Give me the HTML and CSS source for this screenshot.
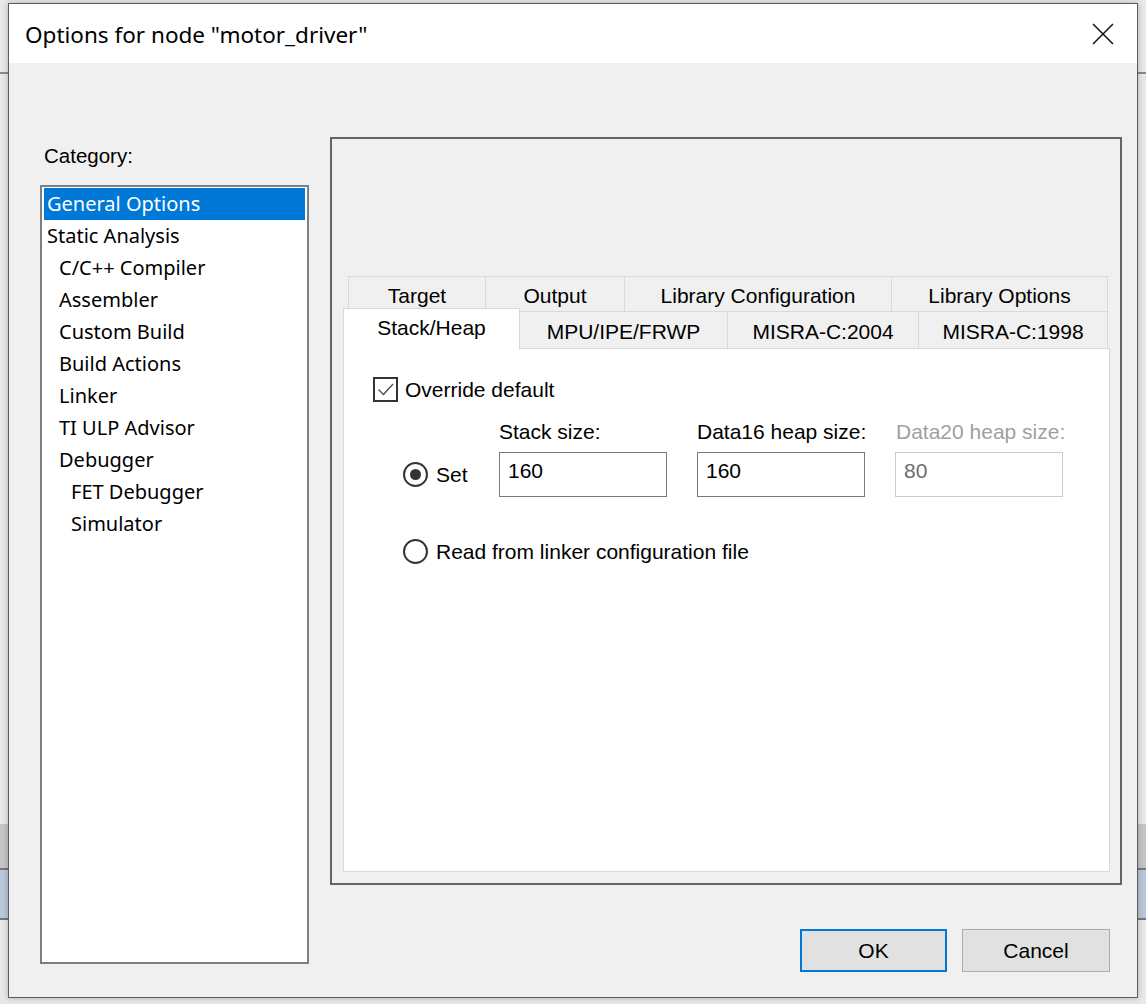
FILE: index.html
```html
<!DOCTYPE html>
<html>
<head>
<meta charset="utf-8">
<title>Options for node "motor_driver"</title>
<link rel="stylesheet" href="styles.css">
</head>
<body>
<div class="dialog">
  <div class="titlebar">
    <span class="title">Options for node "motor_driver"</span>
    <svg class="close" width="22" height="22" viewBox="0 0 22 22"><path d="M1 1 L21 21 M21 1 L1 21" stroke="#111" stroke-width="1.5" fill="none"/></svg>
  </div>
  <div class="body">
    <div class="leftcol">
      <div class="cat-label">Category:</div>
      <div class="listbox">
        <div class="item sel">General Options</div>
        <div class="item">Static Analysis</div>
        <div class="item l1">C/C++ Compiler</div>
        <div class="item l1">Assembler</div>
        <div class="item l1">Custom Build</div>
        <div class="item l1">Build Actions</div>
        <div class="item l1">Linker</div>
        <div class="item l1">TI ULP Advisor</div>
        <div class="item l1">Debugger</div>
        <div class="item l2">FET Debugger</div>
        <div class="item l2">Simulator</div>
      </div>
    </div>
    <div class="rightcol">
      <div class="group">
        <div class="tabrow back">
          <div class="tab t-target">Target</div>
          <div class="tab t-output">Output</div>
          <div class="tab t-libconf">Library Configuration</div>
          <div class="tab t-libopt">Library Options</div>
        </div>
        <div class="tabrow front">
          <div class="tab t-stack active">Stack/Heap</div>
          <div class="tab t-mpu">MPU/IPE/FRWP</div>
          <div class="tab t-m2004">MISRA-C:2004</div>
          <div class="tab t-m1998">MISRA-C:1998</div>
        </div>
        <div class="page">
          <div class="check-row">
            <span class="checkbox"><svg width="21" height="21" viewBox="0 0 21 21"><path d="M3.5 10.5 L8.5 15.5 L18 5" stroke="#4a4a4a" stroke-width="1.3" fill="none"/></svg></span>
            <span class="lbl">Override default</span>
          </div>
          <div class="set-grid">
            <div class="flabel c2">Stack size:</div>
            <div class="flabel c3">Data16 heap size:</div>
            <div class="flabel c4 disabled">Data20 heap size:</div>
            <div class="radio-wrap c1"><span class="radio on"></span><span class="lbl">Set</span></div>
            <div class="input c2">160</div>
            <div class="input c3">160</div>
            <div class="input c4 dis">80</div>
          </div>
          <div class="radio-row"><span class="radio"></span><span class="lbl">Read from linker configuration file</span></div>
        </div>
      </div>
      <div class="buttons">
        <div class="btn default">OK</div>
        <div class="btn">Cancel</div>
      </div>
    </div>
  </div>
</div>
</body>
</html>
```

FILE: styles.css
```css
html, body {
  margin: 0;
  padding: 0;
}
body {
  width: 1146px;
  height: 1004px;
  overflow: hidden;
  background-color: #e8e8e8;
  background-image:
    linear-gradient(to bottom,
      transparent 0, transparent 72px, #8a8a8a 72px, #8a8a8a 74px, transparent 74px,
      transparent 824px, #c6c6c6 824px, #c6c6c6 868px, #777 868px, #777 870px,
      #b9c8da 870px, #b9c8da 918px, #777 918px, #777 920px, transparent 920px);
  font-family: "Liberation Sans", Arial, sans-serif;
  color: #000;
}
.dialog {
  margin: 3px 0 0 8px;
  width: 1128px;
  height: 993px;
  border: 1px solid #5c5c5c;
  background: #f0f0f0;
  box-shadow: 0 0 6px rgba(0,0,0,0.25);
  display: flex;
  flex-direction: column;
}
.titlebar {
  height: 59px;
  background: #fff;
  display: flex;
  align-items: center;
  justify-content: space-between;
  padding: 2px 23px 0 16px;
  box-sizing: border-box;
}
.title {
  font-family: "Noto Sans", "Open Sans", sans-serif;
  font-size: 22.5px;
  color: #000;
}
.close {
  display: block;
  margin-top: -2px;
}
.body {
  flex: 1;
  display: flex;
  padding: 74px 15px 0 31px;
  gap: 21px;
}
.leftcol {
  width: 269px;
  display: flex;
  flex-direction: column;
}
.cat-label {
  padding-top: 8px;
  height: 22px;
  line-height: 22px;
  margin-bottom: 18px;
  font-size: 20.5px;
  padding-left: 4px;
}
.listbox {
  height: 779px;
  box-sizing: border-box;
  border: 2px solid #7f7f7f;
  background: #fff;
  padding: 1px 2px;
}
.item {
  height: 32px;
  line-height: 32px;
  padding-left: 3px;
  font-family: "Noto Sans", "Open Sans", sans-serif;
  font-size: 20px;
  color: #000;
  white-space: nowrap;
}
.item.sel {
  background: #0078d7;
  color: #fff;
}
.item.l1 { padding-left: 15px; }
.item.l2 { padding-left: 27px; }
.rightcol {
  width: 792px;
  display: flex;
  flex-direction: column;
}
.group {
  height: 748px;
  box-sizing: border-box;
  border: 2px solid #646464;
  padding: 137px 10px 11px 11px;
  display: flex;
  flex-direction: column;
}
.tabrow {
  display: flex;
  font-size: 21px;
}
.tabrow.back {
  height: 35px;
  margin-left: 5px;
}
.tabrow.front {
  height: 37px;
}
.tab {
  box-sizing: border-box;
  border: 1px solid #d9d9d9;
  border-bottom: none;
  margin-right: -1px;
  background: #f0f0f0;
  display: flex;
  align-items: center;
  justify-content: center;
  white-space: nowrap;
}
.tabrow.back .tab { padding-top: 3px; }
.tabrow.front .tab { padding-top: 3px; }
.t-target { width: 138px; }
.t-output { width: 140px; }
.t-libconf { width: 268px; }
.t-libopt { width: 217px; }
.t-stack { width: 177px; }
.t-mpu { width: 209px; }
.t-m2004 { width: 192px; }
.t-m1998 { width: 190px; }
.tab.active {
  background: #fff;
  margin-top: -3px;
  height: 42px;
  padding-top: 0 !important;
  padding-bottom: 4px;
  position: relative;
  z-index: 1;
}
.page {
  flex: 1;
  background: #fff;
  border: 1px solid #d9d9d9;
  padding: 28px 0 0 29px;
  font-size: 21px;
}
.check-row {
  display: flex;
  align-items: center;
  gap: 7px;
  height: 25px;
}
.checkbox {
  width: 25px;
  height: 25px;
  box-sizing: border-box;
  border: 2px solid #333;
  display: flex;
  align-items: center;
  justify-content: center;
}
.checkbox svg { display: block; }
.lbl { white-space: nowrap; }
.set-grid {
  margin-top: 19px;
  margin-left: 30px;
  display: grid;
  grid-template-columns: 66px 168px 168px 168px;
  grid-template-rows: 22px 45px;
  column-gap: 30px;
  row-gap: 9px;
}
.set-grid .c1 { grid-column: 1; grid-row: 2; }
.set-grid .flabel.c2, .set-grid .input.c2 { grid-column: 2; }
.set-grid .flabel.c3, .set-grid .input.c3 { grid-column: 3; }
.set-grid .flabel.c4, .set-grid .input.c4 { grid-column: 4; }
.set-grid .flabel { grid-row: 1; line-height: 22px; white-space: nowrap; }
.set-grid .input { grid-row: 2; }
.flabel.disabled { color: #a0a0a0; padding-left: 1px; }
.radio-wrap {
  display: flex;
  align-items: center;
  gap: 8px;
}
.radio {
  width: 25px;
  height: 25px;
  box-sizing: border-box;
  border: 2px solid #333;
  border-radius: 50%;
  display: flex;
  align-items: center;
  justify-content: center;
  flex: none;
}
.radio.on::after {
  content: "";
  width: 11px;
  height: 11px;
  border-radius: 50%;
  background: #333;
}
.input {
  box-sizing: border-box;
  height: 45px;
  border: 1px solid #7a7a7a;
  background: #fff;
  padding: 6px 0 0 8px;
  line-height: 24px;
}
.input.dis {
  border-color: #cccccc;
  color: #6d6d6d;
}
.radio-row {
  margin-top: 42px;
  margin-left: 30px;
  display: flex;
  align-items: center;
  gap: 8px;
}
.buttons {
  margin-top: 44px;
  display: flex;
  justify-content: flex-end;
  gap: 15px;
  padding-right: 12px;
}
.btn {
  box-sizing: border-box;
  width: 148px;
  height: 43px;
  background: #e1e1e1;
  border: 1px solid #adadad;
  font-size: 21px;
  display: flex;
  align-items: center;
  justify-content: center;
}
.btn.default {
  width: 147px;
  border: 2px solid #0078d7;
}
```
